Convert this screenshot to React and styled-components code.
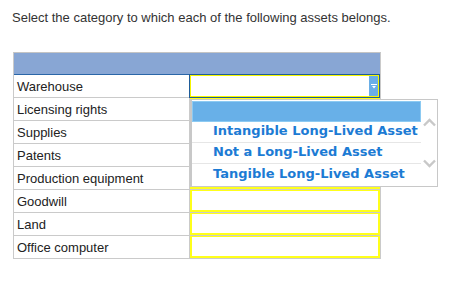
import React from "react";
import styled, { createGlobalStyle } from "styled-components";

const GlobalStyle = createGlobalStyle`
  html, body {
    margin: 0;
    padding: 0;
    background: #ffffff;
  }
  body {
    font-family: "Liberation Sans", Arial, sans-serif;
    color: #222222;
  }
`;

const Page = styled.div`
  position: relative;
  width: 465px;
  height: 308px;
  padding: 10px 0 0 12px;
  box-sizing: border-box;
`;

const Prompt = styled.div`
  font-size: 13px;
  line-height: 15px;
  color: #333333;
`;

const Grid = styled.div`
  position: relative;
  margin: 27px 0 0 1px;
  width: 368px;
  border: 1px solid #cacaca;
  border-top-color: #c4c4c4;
  box-sizing: border-box;
`;

const HeaderBar = styled.div`
  height: 21px;
  background: #88a6d4;
  border-bottom: 1px solid #2a66a8;
`;

const Row = styled.div`
  display: grid;
  grid-template-columns: 176px 1fr;
  height: 22px;
  border-top: ${(p) => (p.$first ? "none" : "1px solid #cacaca")};
`;

const Label = styled.div`
  display: flex;
  align-items: center;
  padding-left: 3px;
  font-size: 13px;
  color: #222222;
  border-right: 1px solid #cacaca;
  white-space: nowrap;
`;

const SelectBox = styled.div`
  position: relative;
  box-sizing: border-box;
  height: ${(p) => (p.$open ? "24px" : "22px")};
  margin: ${(p) => (p.$open ? "-1px 0 0 -1px" : "0")};
  border: ${(p) => (p.$open ? "1px solid #1f5c99" : "2px solid #ffff1a")};
  border-top-width: 1px;
  background: #ffffff;
  display: flex;
  justify-content: flex-end;
`;

const InnerYellow = styled.div`
  flex: 1;
  border: 1px solid #f5f500;
  display: flex;
  justify-content: flex-end;
`;

const ArrowButton = styled.div`
  width: 9px;
  background: #6aaee6;
  display: flex;
  align-items: center;
  justify-content: center;
`;

const Popup = styled.div`
  position: absolute;
  left: 176px;
  top: 46px;
  width: 248px;
  height: 88px;
  box-sizing: border-box;
  border: 1px solid #c8c8c8;
  border-left-width: 2px;
  background: #ffffff;
  display: flex;
  z-index: 5;
`;

const OptionList = styled.div`
  width: 229px;
  display: flex;
  flex-direction: column;
`;

const Highlight = styled.div`
  height: 21px;
  margin-top: 1px;
  background: #68b0e8;
  border: 1px solid #8ccaf2;
  box-sizing: border-box;
`;

const Option = styled.div`
  height: 21px;
  box-sizing: border-box;
  border-bottom: ${(p) => (p.$last ? "none" : "1px solid #e6e6e6")};
  padding: 0 0 3px 21px;
  display: flex;
  align-items: center;
  font-family: "DejaVu Sans", Verdana, sans-serif;
  font-weight: bold;
  font-size: 13px;
  color: #1c7bd4;
  white-space: nowrap;
`;

const ScrollTrack = styled.div`
  flex: 1;
  display: flex;
  flex-direction: column;
  align-items: center;
  padding-top: 18px;
  gap: 32px;
`;

const Chevron = ({ down }) => (
  <svg width="13" height="9" viewBox="0 0 13 9">
    <polyline
      points={down ? "1,1.5 6.5,7 12,1.5" : "1,7.5 6.5,2 12,7.5"}
      fill="none"
      stroke="#c8c8c8"
      strokeWidth="2.4"
    />
  </svg>
);

const assets = [
  "Warehouse",
  "Licensing rights",
  "Supplies",
  "Patents",
  "Production equipment",
  "Goodwill",
  "Land",
  "Office computer",
];

const options = [
  "Intangible Long-Lived Asset",
  "Not a Long-Lived Asset",
  "Tangible Long-Lived Asset",
];

export default function App() {
  return (
    <>
      <GlobalStyle />
      <Page>
        <Prompt>Select the category to which each of the following assets belongs.</Prompt>
        <Grid>
          <HeaderBar />
          {assets.map((name, i) => (
            <Row key={name} $first={i === 0}>
              <Label>{name}</Label>
              {i === 0 ? (
                <SelectBox $open>
                  <InnerYellow>
                    <ArrowButton>
                      <svg width="6" height="5" viewBox="0 0 6 5">
                        <rect x="0" y="0" width="6" height="1" fill="#ffffff" />
                        <polygon points="1,2 5,2 3,4.5" fill="#ffffff" />
                      </svg>
                    </ArrowButton>
                  </InnerYellow>
                </SelectBox>
              ) : (
                <SelectBox />
              )}
            </Row>
          ))}
          <Popup>
            <OptionList>
              <Highlight />
              {options.map((o, i) => (
                <Option key={o} $last={i === options.length - 1}>
                  {o}
                </Option>
              ))}
            </OptionList>
            <ScrollTrack>
              <Chevron />
              <Chevron down />
            </ScrollTrack>
          </Popup>
        </Grid>
      </Page>
    </>
  );
}
